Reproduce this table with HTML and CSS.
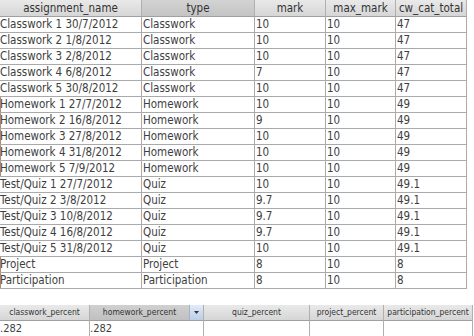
FILE: index.html
```html
<!DOCTYPE html>
<html>
<head>
<meta charset="utf-8">
<link rel="stylesheet" href="styles.css">
</head>
<body>
<div class="page">
  <div class="grid top">
    <div class="hd">assignment_name</div>
    <div class="hd sel">type</div>
    <div class="hd">mark</div>
    <div class="hd">max_mark</div>
    <div class="hd">cw_cat_total</div>

    <div class="c first">Classwork 1 30/7/2012</div><div class="c">Classwork</div><div class="c">10</div><div class="c">10</div><div class="c">47</div>
    <div class="c first">Classwork 2 1/8/2012</div><div class="c">Classwork</div><div class="c">10</div><div class="c">10</div><div class="c">47</div>
    <div class="c first">Classwork 3 2/8/2012</div><div class="c">Classwork</div><div class="c">10</div><div class="c">10</div><div class="c">47</div>
    <div class="c first">Classwork 4 6/8/2012</div><div class="c">Classwork</div><div class="c">7</div><div class="c">10</div><div class="c">47</div>
    <div class="c first">Classwork 5 30/8/2012</div><div class="c">Classwork</div><div class="c">10</div><div class="c">10</div><div class="c">47</div>
    <div class="c first mk">Homework 1 27/7/2012</div><div class="c">Homework</div><div class="c">10</div><div class="c">10</div><div class="c">49</div>
    <div class="c first mk">Homework 2 16/8/2012</div><div class="c">Homework</div><div class="c">9</div><div class="c">10</div><div class="c">49</div>
    <div class="c first mk">Homework 3 27/8/2012</div><div class="c">Homework</div><div class="c">10</div><div class="c">10</div><div class="c">49</div>
    <div class="c first mk">Homework 4 31/8/2012</div><div class="c">Homework</div><div class="c">10</div><div class="c">10</div><div class="c">49</div>
    <div class="c first mk">Homework 5 7/9/2012</div><div class="c">Homework</div><div class="c">10</div><div class="c">10</div><div class="c">49</div>
    <div class="c first">Test/Quiz 1 27/7/2012</div><div class="c">Quiz</div><div class="c">10</div><div class="c">10</div><div class="c">49.1</div>
    <div class="c first">Test/Quiz 2 3/8/2012</div><div class="c">Quiz</div><div class="c">9.7</div><div class="c">10</div><div class="c">49.1</div>
    <div class="c first">Test/Quiz 3 10/8/2012</div><div class="c">Quiz</div><div class="c">9.7</div><div class="c">10</div><div class="c">49.1</div>
    <div class="c first">Test/Quiz 4 16/8/2012</div><div class="c">Quiz</div><div class="c">9.7</div><div class="c">10</div><div class="c">49.1</div>
    <div class="c first">Test/Quiz 5 31/8/2012</div><div class="c">Quiz</div><div class="c">10</div><div class="c">10</div><div class="c">49.1</div>
    <div class="c first mk">Project</div><div class="c">Project</div><div class="c">8</div><div class="c">10</div><div class="c">8</div>
    <div class="c first mk">Participation</div><div class="c">Participation</div><div class="c">8</div><div class="c">10</div><div class="c">8</div>
  </div>

  <div class="grid bottom">
    <div class="hd2">classwork_percent</div>
    <div class="hd2 sel2"><span class="lbl">homework_percent</span><span class="dd"><svg width="7" height="5" viewBox="0 0 7 5"><path d="M1 1 L6 1 L3.5 4 Z" fill="#2a3550"/></svg></span></div>
    <div class="hd2">quiz_percent</div>
    <div class="hd2">project_percent</div>
    <div class="hd2">participation_percent</div>
    <div class="c2">.282</div>
    <div class="c2">.282</div>
    <div class="c2"></div>
    <div class="c2"></div>
    <div class="c2"></div>
  </div>
</div>
</body>
</html>
```
FILE: styles.css
```css
html, body {
  margin: 0;
  padding: 0;
  background: #fff;
}
.page {
  width: 474px;
  height: 336px;
  overflow: hidden;
  font-family: "DejaVu Sans", "Liberation Sans", sans-serif;
  font-stretch: condensed;
  color: #3e3e3e;
  display: flex;
  flex-direction: column;
  gap: 16px;
}
.grid {
  display: grid;
}
.top {
  grid-template-columns: 142px 113px 71px 70px 71px;
  grid-template-rows: 17px;
  grid-auto-rows: 16px;
  width: 467px;
  font-size: 11.5px;
}
.hd {
  background: linear-gradient(#e9e9e9, #d6d6d6);
  border-right: 1px solid #b0b0b0;
  border-bottom: 1px solid #a0a0a0;
  text-align: center;
  line-height: 16px;
  color: #333;
  box-sizing: border-box;
}
.hd.sel {
  background: linear-gradient(#d3d3d3, #c4c4c4);
}
.c {
  border-right: 1px solid #aaaaaa;
  border-bottom: 1px solid #aaaaaa;
  line-height: 15px;
  padding-left: 1px;
  white-space: nowrap;
  overflow: hidden;
  box-sizing: border-box;
}
.c.first {
  padding-left: 0;
}
.c.mk {
  box-shadow: inset 1px 0 0 #b08a70;
}
.bottom {
  grid-template-columns: 90px 114px 106px 74px 89px;
  grid-template-rows: 16px;
  grid-auto-rows: 16px;
  font-size: 8.5px;
}
.hd2 {
  background: linear-gradient(#e9e9e9, #d6d6d6);
  border-right: 1px solid #b0b0b0;
  border-bottom: 1px solid #a0a0a0;
  text-align: center;
  line-height: 15px;
  color: #333;
  box-sizing: border-box;
  white-space: nowrap;
  overflow: hidden;
}
.hd2.sel2 {
  background: linear-gradient(#d0d0d0, #c0c0c0);
  display: flex;
  align-items: stretch;
}
.sel2 .lbl {
  flex: 1;
  text-align: center;
}
.dd {
  width: 13px;
  background: linear-gradient(#e3ebf7, #bccde6);
  border-left: 1px solid #9fb3d0;
  display: flex;
  align-items: center;
  justify-content: center;
}
.c2 {
  border-right: 1px solid #b0b0b0;
  font-size: 11px;
  line-height: 15px;
  white-space: nowrap;
  box-sizing: border-box;
}
```
